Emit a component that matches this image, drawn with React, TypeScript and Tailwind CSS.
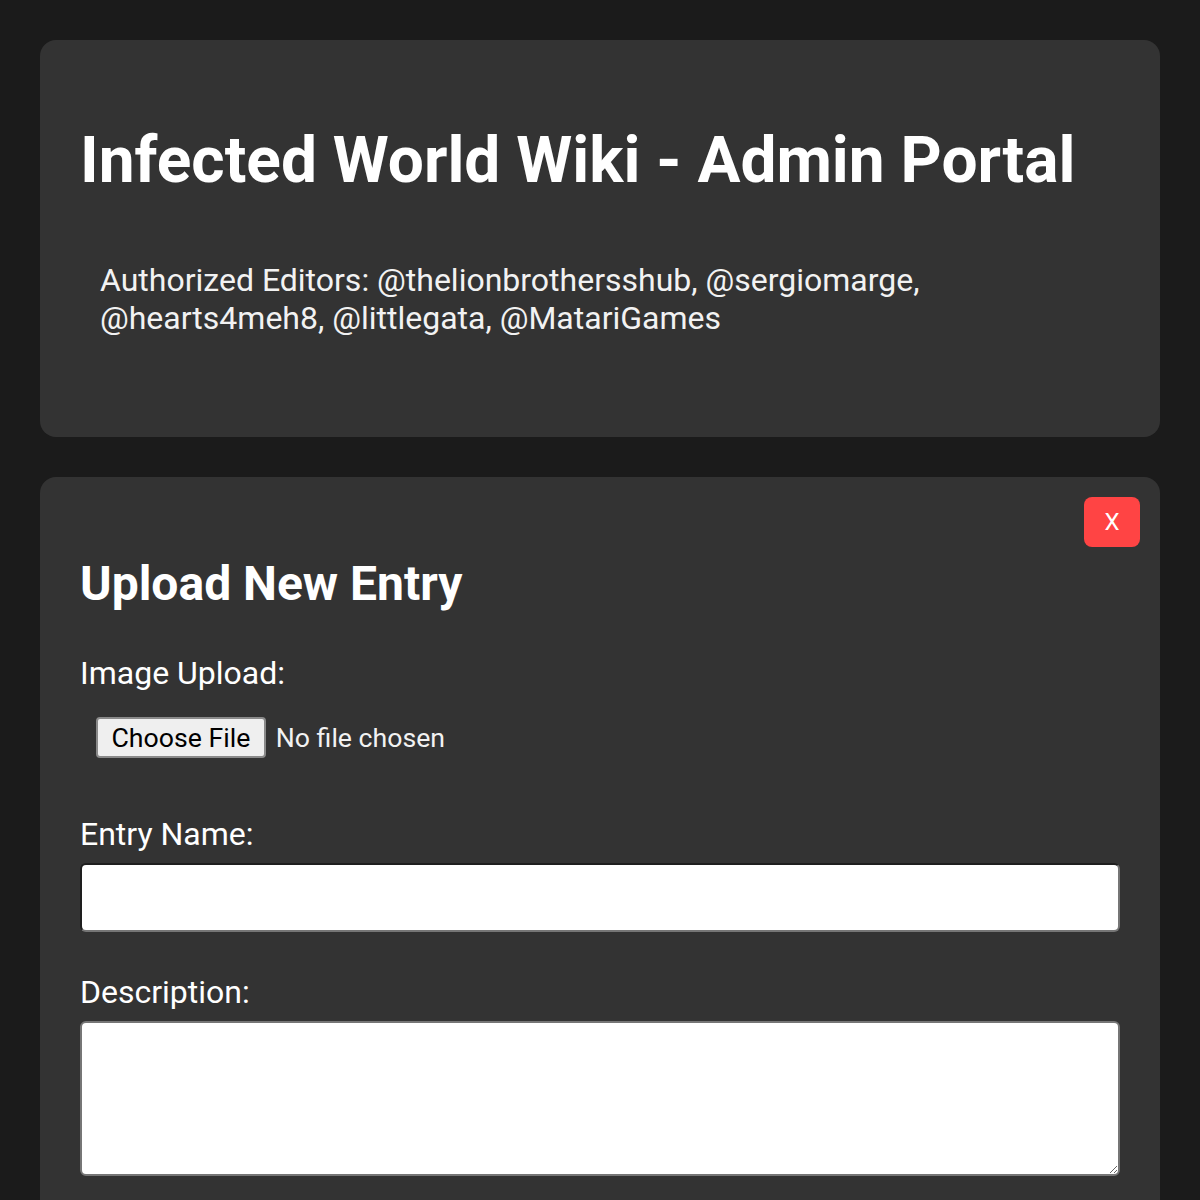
const editors = ["@thelionbrothersshub", "@sergiomarge", "@hearts4meh8", "@littlegata", "@MatariGames"];

const App = () => {
  return (
    <div className="min-h-screen bg-[#1b1b1b] p-10 font-['Roboto','Liberation_Sans',sans-serif] text-white">
      <section className="rounded-2xl bg-[#333333] p-10">
        <h1 className="mt-[43px] text-[64px] font-bold leading-[75px]">Infected World Wiki - Admin Portal</h1>
        <div className="mt-[63px] mb-[60px] px-5">
          <p className="text-[32px] leading-[38px] text-[#f2f2f2]">
            Authorized Editors: {editors.join(", ")}
          </p>
        </div>
      </section>

      <section className="relative mt-10 rounded-2xl bg-[#333333] p-10 pb-16">
        <button className="absolute right-5 top-5 flex h-[50px] w-14 items-center justify-center rounded-lg bg-[#ff4444] text-[24px] text-white">
          X
        </button>
        <h2 className="mt-[39px] text-[48px] font-bold leading-[56px]">Upload New Entry</h2>

        <form className="flex flex-col">
          <label htmlFor="image" className="mt-[43px] block text-[32px] leading-[37px]">
            Image Upload:
          </label>
          <label htmlFor="image" className="mt-[25px] ml-4 flex items-center gap-[10px]">
            <span className="flex h-[41px] items-center rounded-[4px] border-2 border-[#8a8a8a] bg-[#efefef] px-[13.5px] text-[26.67px] text-black">
              Choose File
            </span>
            <span className="text-[26.67px] text-[#f2f2f2]">No file chosen</span>
            <input id="image" type="file" className="hidden" />
          </label>

          <label htmlFor="name" className="mt-[58px] block text-[32px] leading-[37px]">
            Entry Name:
          </label>
          <input
            id="name"
            type="text"
            className="mt-[10px] h-[69px] w-full rounded-md border-2 border-t-[#1e1e1e] border-l-[#1e1e1e] border-r-[#767676] border-b-[#767676] bg-white px-3 text-[26.67px] text-black outline-none"
          />

          <label htmlFor="desc" className="mt-[42px] block text-[32px] leading-[37px]">
            Description:
          </label>
          <textarea
            id="desc"
            className="mt-[10px] h-[155px] w-full rounded-md border-2 border-[#767676] bg-white p-3 text-[26.67px] text-black outline-none"
          />
        </form>
      </section>
    </div>
  );
};

export default App;
